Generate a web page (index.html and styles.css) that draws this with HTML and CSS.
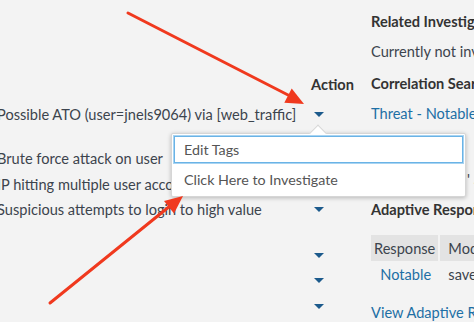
FILE: index.html
```html
<!DOCTYPE html>
<html lang="en">
<head>
    <meta charset="UTF-8">
    <meta name="viewport" content="width=device-width, initial-scale=1.0">
    <title>Notable Events</title>
    <link rel="stylesheet" href="styles.css">
</head>
<body>
    <main class="page">
        <section class="events">
            <div class="event-row event-head">
                <div class="event-title"></div>
                <div class="event-action">Action</div>
            </div>
            <div class="event-row first">
                <div class="event-title">Possible ATO (user=jnels9064) via [web_traffic]</div>
                <div class="event-action"><span class="caret"></span></div>
            </div>
            <div class="event-row">
                <div class="event-title">Brute force attack on user</div>
                <div class="event-action"><span class="caret"></span></div>
            </div>
            <div class="event-row">
                <div class="event-title">IP hitting multiple user accounts</div>
                <div class="event-action"><span class="caret"></span></div>
            </div>
            <div class="event-row">
                <div class="event-title">Suspicious attempts to login to high value</div>
                <div class="event-action"><span class="caret"></span></div>
            </div>
            <div class="event-row gap">
                <div class="event-title"></div>
                <div class="event-action"><span class="caret"></span></div>
            </div>
            <div class="event-row">
                <div class="event-title"></div>
                <div class="event-action"><span class="caret"></span></div>
            </div>
            <div class="event-row">
                <div class="event-title"></div>
                <div class="event-action"><span class="caret"></span></div>
            </div>
        </section>

        <aside class="details">
            <h3 class="detail-head">Related Investigations</h3>
            <p class="detail-line">Currently not investigated</p>
            <h3 class="detail-head correlation">Correlation Search</h3>
            <a class="detail-line detail-link" href="#">Threat - Notable Events - Rule</a>
            <p class="detail-line hidden-line">' and more</p>
            <h3 class="detail-head">Adaptive Responses</h3>
            <table class="responses">
                <thead>
                    <tr><th>Response</th><th class="mode">Mode</th></tr>
                </thead>
                <tbody>
                    <tr><td><a href="#">Notable</a></td><td class="mode">saved</td></tr>
                </tbody>
            </table>
            <a class="detail-line detail-link view-link" href="#">View Adaptive Response Invocations</a>
        </aside>
    </main>

    <div class="action-menu">
        <span class="menu-pointer"></span>
        <a class="menu-item focused" href="#">Edit Tags</a>
        <a class="menu-item" href="#">Click Here to Investigate</a>
    </div>

    <svg class="arrows" width="474" height="322" viewBox="0 0 474 322">
        <line x1="128" y1="13" x2="290" y2="96" />
        <polygon points="304,104 284.3,102.8 291.7,88.6" />
        <line x1="50" y1="303" x2="170" y2="206" />
        <polygon points="183,196 174,213.5 164,201.1" />
    </svg>
</body>
</html>
```

FILE: styles.css
```css
html{
    box-sizing: border-box;
    font-family: "Lato", "Open Sans", sans-serif;
    font-size: 14.6px;
}
*,
*::after,
*::before{
    box-sizing: inherit;
}
body{
    margin: 0;
    width: 474px;
    height: 322px;
    overflow: hidden;
    background-color: #f3f3f3;
    color: #3c444d;
    position: relative;
}
a{
    color: #1d6fa5;
    text-decoration: none;
}
.page{
    display: flex;
}
.events{
    width: 363px;
    flex: none;
    padding-top: 69px;
    margin-left: -3px;
}
.event-row{
    display: flex;
    height: 25.5px;
    align-items: center;
}
.event-head,
.event-row.first{
    height: 30px;
}
.event-row.first{
    margin-bottom: 17px;
}
.event-row.gap{
    margin-top: 20px;
}
.event-title{
    width: 309px;
    flex: none;
    white-space: nowrap;
    overflow: hidden;
}
.event-action{
    flex: 1;
    padding-left: 5px;
}
.event-head .event-action{
    font-weight: bold;
    color: #333;
}
.caret{
    display: block;
    width: 0;
    height: 0;
    margin-left: 3px;
    border-left: 5px solid transparent;
    border-right: 5px solid transparent;
    border-top: 5px solid #1c5a8c;
}
.details{
    flex: 1;
    min-width: 0;
    padding-top: 7px;
    padding-left: 11px;
    white-space: nowrap;
    overflow: hidden;
}
.detail-head{
    margin: 0;
    height: 30px;
    line-height: 30px;
    font-size: 14.6px;
    font-weight: bold;
    color: #333;
}
.detail-head.correlation{
    margin-top: 2px;
}
.detail-line{
    display: block;
    margin: 0;
    height: 30px;
    line-height: 30px;
}
.hidden-line{
    margin-top: 36px;
    padding-left: 96px;
}
.responses{
    margin-top: 10px;
    border-collapse: separate;
    border-spacing: 0;
}
.responses th{
    height: 26px;
    width: 76px;
    padding: 0 3px;
    font-weight: normal;
    background-color: #e3e3e3;
    border-right: 2px solid #f3f3f3;
}
.responses td{
    height: 26px;
    text-align: center;
}
.responses .mode{
    text-align: left;
    padding-left: 8px;
}
.view-link{
    margin-top: 11px;
}
.action-menu{
    position: absolute;
    left: 171px;
    top: 133px;
    width: 295px;
    height: 64px;
    padding: 2px;
    background-color: #fff;
    border: 1px solid #d6d6d6;
    border-radius: 2px;
    box-shadow: 0 1px 4px rgba(0, 0, 0, .25);
    font-size: 14.3px;
}
.menu-pointer{
    position: absolute;
    top: -7px;
    left: 140px;
    width: 12px;
    height: 12px;
    background-color: #fff;
    border-left: 1px solid #d6d6d6;
    border-top: 1px solid #d6d6d6;
    transform: rotate(45deg);
}
.menu-item{
    position: relative;
    display: block;
    height: 28px;
    line-height: 26px;
    padding-left: 9px;
    color: #555;
    border: 1px solid transparent;
}
.menu-item.focused{
    border: 1px solid #6ab3e6;
    box-shadow: 0 0 0 1px #a8d4f2;
    height: 27px;
    margin-bottom: 3px;
}
.arrows{
    position: absolute;
    left: 0;
    top: 0;
}
.arrows line{
    stroke: #f0391e;
    stroke-width: 3;
    stroke-linecap: round;
}
.arrows polygon{
    fill: #f0391e;
}
```
